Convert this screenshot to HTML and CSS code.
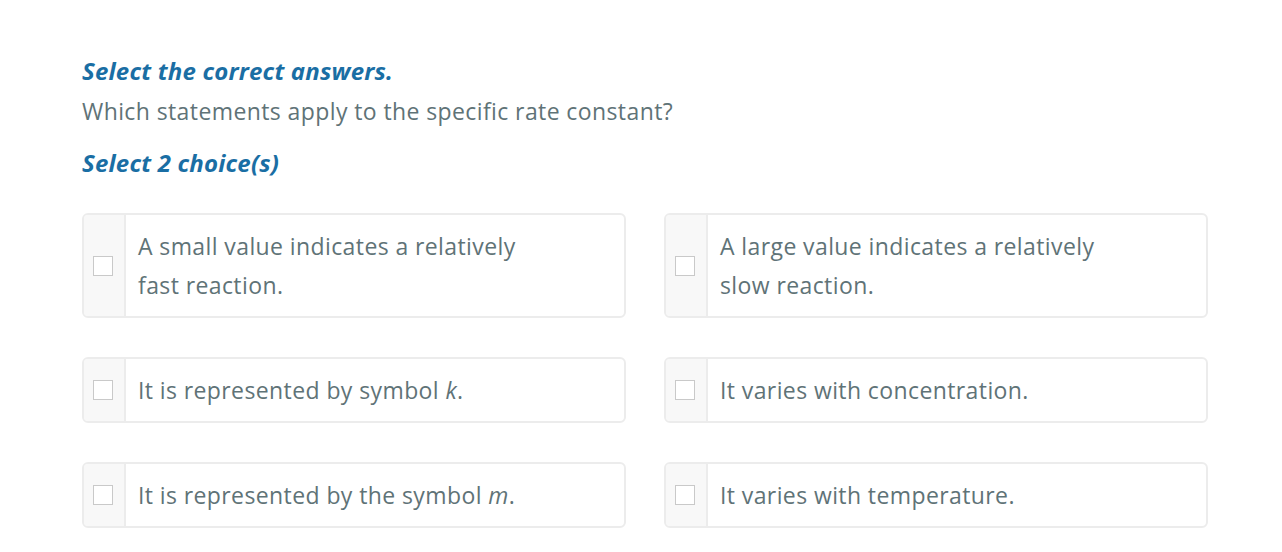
FILE: index.html
```html
<!DOCTYPE html>
<html lang="en">
<head>
<meta charset="utf-8">
<title>Select the correct answers</title>
<link rel="stylesheet" href="styles.css">
</head>
<body>
<main class="question">
  <h2 class="instruction">Select the correct answers.</h2>
  <p class="prompt">Which statements apply to the specific rate constant?</p>
  <h3 class="count">Select 2 choice(s)</h3>
  <div class="choices">
    <label class="choice">
      <span class="box-cell"><span class="box"></span></span>
      <span class="text">A small value indicates a relatively fast reaction.</span>
    </label>
    <label class="choice">
      <span class="box-cell"><span class="box"></span></span>
      <span class="text">A large value indicates a relatively slow reaction.</span>
    </label>
    <label class="choice">
      <span class="box-cell"><span class="box"></span></span>
      <span class="text">It is represented by symbol <i>k</i>.</span>
    </label>
    <label class="choice">
      <span class="box-cell"><span class="box"></span></span>
      <span class="text">It varies with concentration.</span>
    </label>
    <label class="choice">
      <span class="box-cell"><span class="box"></span></span>
      <span class="text">It is represented by the symbol <i>m</i>.</span>
    </label>
    <label class="choice">
      <span class="box-cell"><span class="box"></span></span>
      <span class="text">It varies with temperature.</span>
    </label>
  </div>
</main>
</body>
</html>
```

FILE: styles.css
```css
html, body {
  margin: 0;
  padding: 0;
  background: #ffffff;
}

body {
  font-family: "Open Sans", "Noto Sans", sans-serif;
  color: #5f7377;
}

.question {
  padding: 56px 0 0 82px;
}

.instruction,
.count {
  margin: 0;
  font-size: 24px;
  line-height: 30px;
  font-weight: 700;
  font-style: italic;
  color: #1a6ea4;
  letter-spacing: 0.2px;
}

.prompt {
  margin: 10px 0 0;
  font-size: 23px;
  line-height: 30px;
  letter-spacing: 0.4px;
}

.count {
  margin-top: 22px;
}

.choices {
  margin-top: 35px;
  display: grid;
  grid-template-columns: 544px 544px;
  column-gap: 38px;
  row-gap: 39px;
  align-items: start;
}

.choice {
  display: flex;
  border: 2px solid #ececec;
  border-radius: 6px;
  overflow: hidden;
  background: #fff;
}

.box-cell {
  flex: 0 0 40px;
  background: #f8f8f8;
  border-right: 2px solid #ececec;
  display: flex;
  align-items: center;
  justify-content: center;
}

.box {
  width: 18px;
  height: 18px;
  border: 1px solid #c9c9c9;
  background: #fff;
  margin-right: 2px;
}

.text {
  padding: 12px 12px 11px;
  font-size: 23px;
  line-height: 39px;
  letter-spacing: 0.4px;
  max-width: 405px;
}

.text i {
  font-style: italic;
}
```
